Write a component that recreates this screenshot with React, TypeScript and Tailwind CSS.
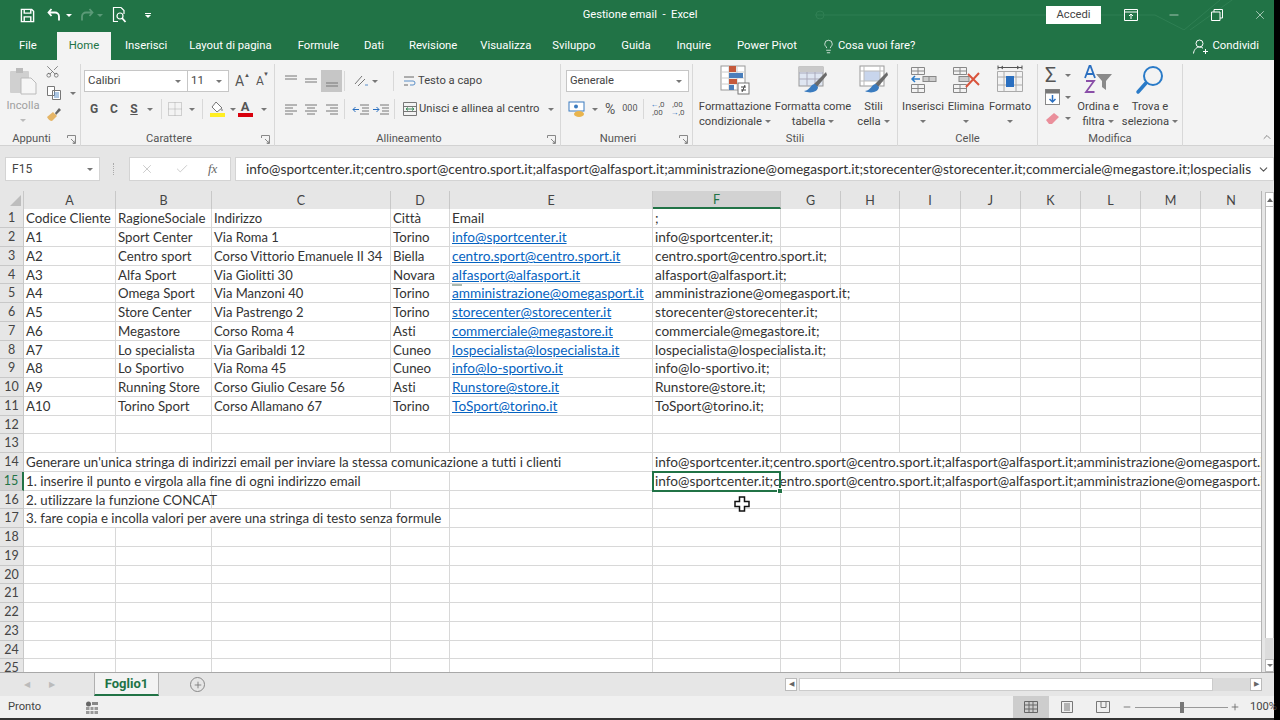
import { ChevronDown, Lightbulb, Minus, Plus, Scissors, X, Check } from 'lucide-react';
import type { ReactNode } from 'react';

const ui = "font-['Roboto',sans-serif]";
const COLS = 'grid grid-cols-[24px_92px_96px_179px_59px_203px_128px_60px_59px_61px_60px_60px_60px_60px_61px]';
const HEADERS = ['A', 'B', 'C', 'D', 'E', 'F', 'G', 'H', 'I', 'J', 'K', 'L', 'M', 'N'];
const SHEET_FONT = "font-['Lato',sans-serif] text-[#333] [font-variant-ligatures:none]";

const clients = [
  ['A1', 'Sport Center', 'Via Roma 1', 'Torino', 'info@sportcenter.it'],
  ['A2', 'Centro sport', 'Corso Vittorio Emanuele II 34', 'Biella', 'centro.sport@centro.sport.it'],
  ['A3', 'Alfa Sport', 'Via Giolitti 30', 'Novara', 'alfasport@alfasport.it'],
  ['A4', 'Omega Sport', 'Via Manzoni 40', 'Torino', 'amministrazione@omegasport.it'],
  ['A5', 'Store Center', 'Via Pastrengo 2', 'Torino', 'storecenter@storecenter.it'],
  ['A6', 'Megastore', 'Corso Roma 4', 'Asti', 'commerciale@megastore.it'],
  ['A7', 'Lo specialista', 'Via Garibaldi 12', 'Cuneo', 'lospecialista@lospecialista.it'],
  ['A8', 'Lo Sportivo', 'Via Roma 45', 'Cuneo', 'info@lo-sportivo.it'],
  ['A9', 'Running Store', 'Corso Giulio Cesare 56', 'Asti', 'Runstore@store.it'],
  ['A10', 'Torino Sport', 'Corso Allamano 67', 'Torino', 'ToSport@torino.it'],
];

const LONG = 'info@sportcenter.it;centro.sport@centro.sport.it;alfasport@alfasport.it;amministrazione@omegasport.it;storecenter@storecenter.it';

type RowData = { cells: Record<number, string>; spill?: number[] };

const rows: RowData[] = [
  { cells: { 0: 'Codice Cliente', 1: 'RagioneSociale', 2: 'Indirizzo', 3: 'Città', 4: 'Email', 5: ';' } },
  ...clients.map((c) => ({
    cells: { 0: c[0], 1: c[1], 2: c[2], 3: c[3], 4: c[4], 5: c[4] + ';' } as Record<number, string>,
  })),
  { cells: {} },
  { cells: {} },
  { cells: { 0: "Generare un'unica stringa di indirizzi email per inviare la stessa comunicazione a tutti i clienti", 5: LONG }, spill: [0, 1, 2, 3, 5, 6, 7, 8, 9, 10, 11, 12, 13] },
  { cells: { 0: '1. inserire il punto e virgola alla fine di ogni indirizzo email', 5: LONG }, spill: [0, 1, 2, 5, 6, 7, 8, 9, 10, 11, 12, 13] },
  { cells: { 0: '2. utilizzare la funzione CONCAT' }, spill: [0] },
  { cells: { 0: '3. fare copia e incolla valori per avere una stringa di testo senza formule' }, spill: [0, 1, 2] },
  ...Array.from({ length: 8 }, () => ({ cells: {} })),
];

function Caret({ className = '' }: { className?: string }) {
  return <span className={'inline-block w-0 h-0 border-x-[3px] border-x-transparent border-t-[3px] border-t-[#777] ' + className} />;
}

function Launcher() {
  return (
    <svg width="9" height="9" viewBox="0 0 9 9" fill="none" stroke="#888">
      <path d="M.5 3V.5H8.500V8.500H6M4 4l4 4M8 5.500V8H5.500" />
    </svg>
  );
}

function Group({ w, label, launcher, children }: { w: string; label: string; launcher?: boolean; children: ReactNode }) {
  return (
    <div className={'relative flex flex-col shrink-0 h-[82px] mt-[4px] border-r border-[#d8d8d8] ' + w}>
      <div className="h-[66px] flex">{children}</div>
      <div className={'h-[16px] pt-[2px] flex items-center justify-center text-[11.2px] text-[#555] ' + (launcher ? 'pr-[17px]' : '')}>{label}</div>
      {launcher && <div className="absolute right-[4px] bottom-[2px]"><Launcher /></div>}
    </div>
  );
}

function BigButton({ w, icon, lines, caret = true }: { w: string; icon: ReactNode; lines: string[]; caret?: boolean }) {
  return (
    <div className={'flex flex-col items-center shrink-0 ' + w}>
      <div className="h-[32px] flex items-center justify-center">{icon}</div>
      <div className="text-[11.2px] leading-[15px] text-[#444] mt-[3px] text-center whitespace-nowrap">{lines[0]}</div>
      <div className="text-[11.2px] leading-[15px] text-[#444] text-center whitespace-nowrap flex items-center gap-[3px] justify-center h-[15px]">
        {lines[1]}
        {caret && <Caret />}
      </div>
    </div>
  );
}

function Lines({ kind }: { kind: 'left' | 'center' | 'right' | 'top' | 'mid' | 'bottom' }) {
  const d = {
    left: 'M2 4h12M2 7h8M2 10h12M2 13h8',
    center: 'M2 4h12M4 7h8M2 10h12M4 13h8',
    right: 'M2 4h12M6 7h8M2 10h12M6 13h8',
    top: 'M2 3h12M2 6h12',
    mid: 'M2 6h12M2 9h12',
    bottom: 'M2 10h12M2 13h12',
  }[kind];
  return <svg width="16" height="16" viewBox="0 0 16 16" fill="none" stroke="#777"><path d={d} /></svg>;
}

function VSep({ className = '' }: { className?: string }) {
  return <span className={'w-px h-[20px] bg-[#d8d8d8] shrink-0 ' + className} />;
}

function Clipboard() {
  return (
    <div className="flex w-full">
      <div className="w-[46px] flex flex-col items-center">
        <svg width="28" height="28" viewBox="0 0 28 28" className="mt-[3px]">
          <rect x="1" y="4" width="19" height="22" rx="1" fill="#d0d0d0" />
          <rect x="7" y="1" width="7" height="5" fill="#bbb" />
          <path d="M12 11h10l5 5v11H12z" fill="#f6f6f6" stroke="#bbb" />
        </svg>
        <span className="text-[11.2px] text-[#a0a0a0] leading-[15px] mt-[3px]">Incolla</span>
        <Caret className="mt-[6px] !border-t-[#bbb]" />
      </div>
      <div className="flex flex-col items-start">
        <Scissors size={15} strokeWidth={1.2} color="#666" className="ml-[-1px] -rotate-90" />
        <div className="flex items-center mt-[6px]">
          <svg width="16" height="16" viewBox="0 0 16 16" fill="#fff" stroke="#777" className="mr-[8px]">
            <path d="M1.500 1.500h7v9h-7zM6.500 5.500h8v9h-8z" />
            <path d="M8 8h5M8 10h5M8 12h5" stroke="#5a8fc8" />
          </svg>
          <Caret />
        </div>
        <svg width="16" height="16" viewBox="0 0 16 16" className="mt-[5px]">
          <path d="M9 7 L13 2 L15 4 L10 9z" fill="#666" />
          <path d="M1 11 L7 6 L11 10 L6 15 Q3 15 1 11z" fill="#e5b566" />
        </svg>
      </div>
    </div>
  );
}

function FontGroup() {
  return (
    <div className="flex flex-col pl-[3px] pt-[6px] w-full">
      <div className="flex items-center h-[22px]">
        <div className="w-[104px] h-[22px] border border-[#c6c6c6] bg-white flex items-center justify-between px-[3px] text-[11.5px] text-[#444]">
          <span>Calibri</span>
          <Caret className="mr-[3px]" />
        </div>
        <div className="w-[41px] h-[22px] border border-[#c6c6c6] border-l-0 bg-white flex items-center justify-between px-[3px] text-[11.5px] text-[#444]">
          <span>11</span>
          <Caret className="mr-[3px]" />
        </div>
        <span className="ml-[6px] text-[14px] text-[#555] w-[20px] relative">A<span className="absolute text-[6px] left-[9px] top-[-1px]">▲</span></span>
        <span className="ml-[1px] text-[12px] text-[#555] w-[14px] relative">A<span className="absolute text-[6px] left-[7px] top-[-3px]">▼</span></span>
      </div>
      <div className="flex items-center h-[22px] mt-[6px] text-[12px] font-bold text-[#555]">
        <span className="w-[20px] text-center">G</span>
        <span className="w-[20px] text-center">C</span>
        <span className="w-[20px] text-center underline">S</span>
        <Caret className="ml-[3px]" />
        <VSep className="ml-[8px]" />
        <svg width="16" height="16" viewBox="0 0 16 16" fill="none" stroke="#aaa" strokeDasharray="1 1" className="ml-[5px]"><path d="M1.500 1.500h13v13h-13zM8 1.500v13M1.500 8h13" /></svg>
        <Caret className="ml-[6px]" />
        <VSep className="ml-[7px]" />
        <div className="ml-[6px] flex flex-col items-center w-[16px]">
          <svg width="14" height="12" viewBox="0 0 14 12" fill="#fff" stroke="#777"><path d="M6 1 12 7 7 11 2 6z" /><path d="M12 8v2" /></svg>
          <span className="w-[15px] h-[4px] bg-[#ffee22]" />
        </div>
        <Caret className="ml-[5px]" />
        <div className="ml-[1px] flex flex-col items-center w-[16px] leading-none">
          <span className="text-[13px] text-[#555] font-bold leading-[12px]">A</span>
          <span className="w-[15px] h-[4px] bg-[#d8000c]" />
        </div>
        <Caret className="ml-[8px]" />
      </div>
    </div>
  );
}

function AlignGroup() {
  return (
    <div className="flex flex-col pl-[6px] pt-[6px] w-full text-[11.2px] text-[#444]">
      <div className="flex items-center h-[22px]">
        <span className="w-[20px] flex justify-center"><Lines kind="top" /></span>
        <span className="w-[20px] flex justify-center"><Lines kind="mid" /></span>
        <span className="w-[21px] h-[22px] flex items-center justify-center bg-[#c6c6c6]"><Lines kind="bottom" /></span>
        <VSep className="ml-[2px]" />
        <svg width="18" height="16" viewBox="0 0 18 16" fill="none" stroke="#777" className="ml-[7px]"><path d="M3 11 10 3M6 13l7-7" /><path d="M13 12h3" stroke="#5a8fc8" /></svg>
        <Caret className="ml-[2px]" />
        <VSep className="ml-[15px]" />
        <svg width="16" height="16" viewBox="0 0 16 16" fill="none" className="ml-[7px]"><path d="M3 4h10M3 12h4" stroke="#666" /><path d="M3 8h9a2 2 0 0 1 0 4H9" stroke="#5a8fc8" /></svg>
        <span className="ml-[1px] whitespace-nowrap pt-[1px]">Testo a capo</span>
      </div>
      <div className="flex items-center h-[22px] mt-[6px]">
        <span className="w-[20px] flex justify-center"><Lines kind="left" /></span>
        <span className="w-[20px] flex justify-center"><Lines kind="center" /></span>
        <span className="w-[21px] flex justify-center"><Lines kind="right" /></span>
        <VSep className="ml-[2px]" />
        <svg width="18" height="16" viewBox="0 0 18 16" fill="none" stroke="#777" className="ml-[7px]"><path d="M8 4h9M10 7h7M10 10h7M8 13h9" /><path d="M7 8.500H1M3.500 6 1 8.500 3.500 11" stroke="#2a6fc0" /></svg>
        <svg width="18" height="16" viewBox="0 0 18 16" fill="none" stroke="#777" className="ml-[2px]"><path d="M8 4h9M10 7h7M10 10h7M8 13h9" /><path d="M1 8.500h6M4.500 6 7 8.500 4.500 11" stroke="#2a6fc0" /></svg>
        <VSep className="ml-[4px]" />
        <svg width="16" height="16" viewBox="0 0 16 16" fill="none" stroke="#777" className="ml-[7px]"><path d="M1.500 1.500h13v13h-13zM1.500 5.500h13M1.500 10.500h13" /><path d="M4 8h8M4 8l2-1.500M4 8l2 1.500M12 8l-2-1.500M12 8l-2 1.500" stroke="#3a8a5a" /></svg>
        <span className="ml-[1px] whitespace-nowrap pt-[1px]">Unisci e allinea al centro</span>
        <Caret className="ml-[9px]" />
      </div>
    </div>
  );
}

function NumberGroup() {
  return (
    <div className="flex flex-col pl-[5px] pt-[6px] w-full">
      <div className="w-[123px] h-[22px] border border-[#c6c6c6] bg-white flex items-center justify-between px-[3px] text-[11.2px] text-[#444]">
        <span>Generale</span>
        <Caret className="mr-[3px]" />
      </div>
      <div className="flex items-center h-[22px] mt-[6px] text-[#555]">
        <svg width="18" height="18" viewBox="0 0 18 18" className="ml-[2px]">
          <rect x="1" y="2" width="15" height="9" fill="#fff" stroke="#3a7bbf" />
          <circle cx="8" cy="6.500" r="2" fill="#3a7bbf" />
          <ellipse cx="11" cy="14" rx="5" ry="3" fill="#e9b44c" />
        </svg>
        <Caret className="ml-[6px]" />
        <span className="ml-[7px] text-[14px]">%</span>
        <span className="ml-[7px] text-[9px]">000</span>
        <VSep className="ml-[6px]" />
        <span className="ml-[5px] text-[8px] leading-[8px] text-center w-[16px]"><span className="text-[#2a6fc0]">←</span>,0<br />,00</span>
        <span className="ml-[4px] text-[8px] leading-[8px] text-center w-[16px]">,00<br /><span className="text-[#2a6fc0]">→</span>,0</span>
      </div>
    </div>
  );
}

function CondFormatIcon() {
  return (
    <svg width="30" height="30" viewBox="0 0 30 30">
      <rect x="1" y="1" width="24" height="24" fill="#fff" stroke="#999" />
      <path d="M1 7h24M1 13h24M1 19h24M9 1v24M17 1v24" stroke="#ccc" />
      <rect x="9" y="1" width="7" height="6" fill="#c55a3c" />
      <rect x="9" y="8" width="14" height="5" fill="#4a7ebb" />
      <rect x="9" y="14" width="8" height="5" fill="#c55a3c" />
      <rect x="9" y="20" width="5" height="5" fill="#4a7ebb" />
      <rect x="18" y="18" width="11" height="11" fill="#fff" stroke="#777" />
      <path d="M21 22h5M21 25h5M25 20l-3 7" stroke="#444" fill="none" />
    </svg>
  );
}

function TableIcon() {
  return (
    <svg width="30" height="28" viewBox="0 0 30 28">
      <rect x="1" y="1" width="24" height="19" fill="#dfe6f2" stroke="#999" />
      <path d="M1 7h24M1 13h24M9 1v19M17 1v19" stroke="#aab" />
      <rect x="1" y="1" width="24" height="5" fill="#c9c9c9" />
      <path d="M28 6 16 18l3 3L29 9z" fill="#6b6b6b" />
      <path d="M17 18c-5 0-4 6-11 7 6 3 14 1 14-4z" fill="#3a7bbf" />
    </svg>
  );
}

function CellStyleIcon() {
  return (
    <svg width="30" height="30" viewBox="0 0 30 30">
      <rect x="1" y="1" width="24" height="20" fill="#fff" stroke="#999" />
      <rect x="5" y="6" width="16" height="10" fill="#c8d5ec" />
      <path d="M1 6h24M1 16h24M5 1v20M21 1v20" stroke="#bbb" />
      <path d="M28 7 16 19l3 3L29 10z" fill="#6b6b6b" />
      <path d="M17 19c-5 0-4 6-11 7 6 3 14 1 14-4z" fill="#3a7bbf" />
    </svg>
  );
}

function InsertIcon() {
  return (
    <svg width="28" height="28" viewBox="0 0 28 28" fill="none" stroke="#888">
      <path d="M2.500 1.500h13v7h-13zM9 1.500v7M2.500 18.500h13v8h-13zM9 18.500v8M2.500 22.500h13M2.500 5h13" />
      <rect x="14" y="10.500" width="13" height="5" fill="#ccc" />
      <path d="M20 11v4" />
      <path d="M11 13H3M6 10l-3 3 3 3" stroke="#2a7bc8" strokeWidth="1.500" />
    </svg>
  );
}

function DeleteIcon() {
  return (
    <svg width="30" height="28" viewBox="0 0 30 28" fill="none" stroke="#888">
      <path d="M2.500 1.500h13v7h-13zM9 1.500v7M2.500 18.500h13v8h-13zM9 18.500v8M2.500 22.500h13M2.500 5h13" />
      <rect x="8" y="10.500" width="10" height="5" fill="#ccc" />
      <path d="M17 8 28 19M28 7 15 21" stroke="#d9543c" strokeWidth="2" />
    </svg>
  );
}

function FormatIcon() {
  return (
    <svg width="28" height="30" viewBox="0 0 28 30" fill="none" stroke="#888">
      <path d="M1.500 6.500h25v20h-25zM1.500 12h25M1.500 20h25M8 6.500v20M20 6.500v20" stroke="#aaa" />
      <rect x="10" y="11" width="8" height="11" fill="#2a6fc0" stroke="none" />
      <path d="M2 2.500h24M2 .5v4M26 .5v4" stroke="#555" />
      <path d="M5 2.500l2-1.500M5 2.500l2 1.500M23 2.500l-2-1.500M23 2.500l-2 1.500" stroke="#555" />
    </svg>
  );
}

function EditGroup() {
  return (
    <div className="flex w-full">
      <div className="w-[34px] pl-[7px] pt-[1px] flex flex-col shrink-0">
        <div className="flex items-center h-[20px]">
          <span className="text-[20px] leading-[20px] text-[#555] w-[15px]">Σ</span>
          <Caret className="ml-[5px]" />
        </div>
        <div className="flex items-center h-[20px] mt-[2px]">
          <svg width="15" height="16" viewBox="0 0 15 16" className="shrink-0">
            <rect x=".5" y=".5" width="14" height="15" fill="#fff" stroke="#888" />
            <rect x=".5" y=".5" width="14" height="4" fill="#777" />
            <path d="M7.500 6v7M4.500 10l3 3 3-3" fill="none" stroke="#2a6fc0" strokeWidth="1.500" />
          </svg>
          <Caret className="ml-[5px]" />
        </div>
        <div className="flex items-center h-[20px] mt-[1px]">
          <svg width="15" height="14" viewBox="0 0 15 14" className="shrink-0"><path d="M1 9 9 2l5 4-7 7H4z" fill="#ea8f9b" /></svg>
          <Caret className="ml-[5px]" />
        </div>
      </div>
      <BigButton
        w="w-[52px]"
        lines={['Ordina e', 'filtra']}
        icon={
          <svg width="30" height="30" viewBox="0 0 30 30">
            <path d="M2 13 6.500 1h1L12 13M3.800 9h7" fill="none" stroke="#2a6fc0" strokeWidth="1.800" />
            <path d="M3 16h8L3 27h8.500" fill="none" stroke="#8a4fa8" strokeWidth="1.800" />
            <path d="M13 9h16l-6 7v9l-4-3v-6z" fill="#8a8a8a" />
          </svg>
        }
      />
      <BigButton
        w="w-[52px]"
        lines={['Trova e', 'seleziona']}
        icon={
          <svg width="30" height="30" viewBox="0 0 30 30" fill="none" stroke="#2a7bc8">
            <circle cx="18" cy="11" r="9" strokeWidth="2" />
            <path d="M11 18 3 27" strokeWidth="3.500" strokeLinecap="round" />
          </svg>
        }
      />
    </div>
  );
}

function TitleBar() {
  return (
    <div className="relative h-[30px] flex items-center text-white overflow-hidden">
      <svg className="absolute inset-0" width="1274" height="60" fill="none" stroke="#2f7f53">
        <path d="M815 15h340l35 18M850 33h130M1190 30l70-50M1160 50l60-50" />
        <circle cx="820" cy="15" r="4" />
      </svg>
      <svg width="15" height="15" viewBox="0 0 16 16" fill="none" stroke="#fff" strokeWidth="1.500" className="ml-[20px] relative">
        <path d="M1.500 1.500h11l2 2v11h-13zM4.500 1.500v4h7v-4M4.500 14.500v-5h7v5" />
      </svg>
      <svg width="15" height="14" viewBox="0 0 15 14" fill="none" stroke="#fff" strokeWidth="1.800" className="ml-[12px] relative">
        <path d="M4.500 1 1.500 4.500 4.500 8M2 4.500h6a4 4 0 0 1 4 4v4" />
      </svg>
      <Caret className="ml-[4px] relative !border-t-white" />
      <svg width="15" height="14" viewBox="0 0 15 14" fill="none" stroke="#5b9a78" strokeWidth="1.800" className="ml-[7px] relative">
        <path d="M10.500 1 13.500 4.500 10.500 8M13 4.500H7a4 4 0 0 0-4 4v4" />
      </svg>
      <Caret className="ml-[3px] relative !border-t-[#5b9a78]" />
      <svg width="16" height="18" viewBox="0 0 16 18" fill="none" stroke="#fff" strokeWidth="1.200" className="ml-[9px] relative">
        <path d="M9 1.500H1.500v14H6M9 1.500l3 3V8" />
        <circle cx="8" cy="10" r="3" />
        <path d="M10 12l3.500 4" strokeWidth="1.800" />
      </svg>
      <span className="ml-[17px] relative flex flex-col items-center gap-[1px]">
        <span className="w-[6px] h-px bg-white" />
        <Caret className="!border-t-white" />
      </span>
      <div className="absolute left-0 right-0 text-center text-[11.2px] pt-[1px]">
        <span className="ml-[6px] whitespace-pre">Gestione email  -  Excel</span>
      </div>
      <div className="ml-auto flex items-center relative">
        <div className="w-[55px] h-[18px] bg-white text-[#444] text-[11.2px] flex items-center justify-center">Accedi</div>
        <svg width="14" height="12" viewBox="0 0 14 12" fill="none" stroke="#fff" className="ml-[23px]">
          <path d="M.5 .5h13v11H.5zM.5 3h13M7 10V5M5 7l2-2 2 2" />
        </svg>
        <Minus size={14} strokeWidth={1} className="ml-[29px]" />
        <svg width="12" height="12" viewBox="0 0 12 12" fill="none" stroke="#fff" className="ml-[30px]">
          <path d="M.5 3h8.500v8.500H.5zM3 3V.5h8.500V9H9" />
        </svg>
        <X size={14} strokeWidth={1} className="ml-[30px] mr-[7px]" />
      </div>
    </div>
  );
}

function TabBar() {
  const tabs = [
    ['Layout di pagina', 'ml-[22px]'],
    ['Formule', 'ml-[26px]'],
    ['Dati', 'ml-[25px]'],
    ['Revisione', 'ml-[25px]'],
    ['Visualizza', 'ml-[23px]'],
    ['Sviluppo', 'ml-[21px]'],
    ['Guida', 'ml-[26px]'],
    ['Inquire', 'ml-[26px]'],
    ['Power Pivot', 'ml-[26px]'],
  ];
  return (
    <div className="relative h-[30px] flex items-end text-white text-[11.3px]">
      <span className="ml-[19px] w-[38px] h-[30px] pt-[2px] flex items-center">File</span>
      <span className="w-[54px] h-[28px] bg-[#f3f3f3] text-[#217346] flex items-center justify-center">Home</span>
      <span className="ml-[14px] h-[30px] pt-[2px] flex items-center whitespace-nowrap">Inserisci</span>
      {tabs.map(([t, m]) => (
        <span key={t} className={'h-[30px] pt-[2px] flex items-center whitespace-nowrap ' + m}>{t}</span>
      ))}
      <span className="ml-[24px] h-[30px] pt-[2px] flex items-center gap-[2px] whitespace-nowrap">
        <Lightbulb size={15} strokeWidth={1.2} />
        Cosa vuoi fare?
      </span>
      <span className="ml-auto mr-[15px] h-[30px] pt-[2px] flex items-center gap-[4px]">
        <svg width="16" height="15" viewBox="0 0 16 15" fill="none" stroke="#fff">
          <circle cx="6.500" cy="4.500" r="3.500" />
          <path d="M.5 14.500C1 10 4 8 6.500 8c1.500 0 2.500.5 3.500 1.200M12.500 10v5M10 12.500h5" />
        </svg>
        Condividi
      </span>
    </div>
  );
}

function Ribbon() {
  return (
    <div className="relative h-[86px] bg-[#f3f3f3] flex border-b border-[#d2d2d2]">
      <Group w="w-[81px]" label="Appunti" launcher><Clipboard /></Group>
      <Group w="w-[194px]" label="Carattere" launcher><FontGroup /></Group>
      <Group w="w-[286px]" label="Allineamento" launcher><AlignGroup /></Group>
      <Group w="w-[132px]" label="Numeri" launcher><NumberGroup /></Group>
      <Group w="w-[205px]" label="Stili">
        <BigButton w="w-[84px]" icon={<CondFormatIcon />} lines={['Formattazione', 'condizionale']} />
        <BigButton w="w-[72px]" icon={<TableIcon />} lines={['Formatta come', 'tabella']} />
        <BigButton w="w-[49px]" icon={<CellStyleIcon />} lines={['Stili', 'cella']} />
      </Group>
      <Group w="w-[140px]" label="Celle">
        <BigButton w="w-[50px]" icon={<InsertIcon />} lines={['Inserisci', '']} />
        <BigButton w="w-[36px]" icon={<DeleteIcon />} lines={['Elimina', '']} />
        <BigButton w="w-[52px]" icon={<FormatIcon />} lines={['Formato', '']} />
      </Group>
      <Group w="w-[145px]" label="Modifica"><EditGroup /></Group>
      <ChevronDown size={12} strokeWidth={1.5} color="#666" className="absolute right-[1px] bottom-[2px] rotate-180" />
    </div>
  );
}

function FormulaBar() {
  return (
    <div className="h-[45px] bg-[#e6e6e6] flex items-start pt-[11px]">
      <div className="ml-[5px] w-[95px] h-[24px] bg-white border border-[#d4d4d4] flex items-center justify-between pl-[6px] pr-[6px] text-[12px] text-[#444]">
        <span>F15</span>
        <Caret />
      </div>
      <span className="ml-[13px] mt-[6px] h-[12px] w-px border-l border-dotted border-[#aaa]" />
      <div className="ml-[15px] w-[102px] h-[24px] bg-white border border-[#d4d4d4] flex items-center text-[#bbb]">
        <X size={14} strokeWidth={1.3} className="ml-[10px]" />
        <Check size={14} strokeWidth={1.3} className="ml-[21px]" />
        <span className="ml-[19px] text-[13px] italic font-['Liberation_Serif',serif] text-[#666]">fx</span>
      </div>
      <div className="ml-[4px] flex-1 h-[24px] bg-white border border-[#d4d4d4] flex items-center pl-[10px] pr-[2px] relative overflow-hidden">
        <span className={SHEET_FONT + ' text-[13.65px] whitespace-nowrap overflow-hidden w-[1007px] shrink-0'}>
          info@sportcenter.it;centro.sport@centro.sport.it;alfasport@alfasport.it;amministrazione@omegasport.it;storecenter@storecenter.it;commerciale@megastore.it;lospecialis
        </span>
        <ChevronDown size={13} strokeWidth={2} color="#555" className="ml-auto mr-[1px]" />
      </div>
    </div>
  );
}

function ColumnHeader() {
  return (
    <div className={COLS + " h-[18px] shrink-0 bg-[#e6e6e6] text-[12.5px] leading-[15px] text-[#444] font-['Lato',sans-serif]"}>
      <div className="relative border-r border-[#c8c8c8]">
        <span className="absolute right-[2px] bottom-[3px] w-0 h-0 border-l-[11px] border-l-transparent border-b-[11px] border-b-[#bdbdbd]" />
      </div>
      {HEADERS.map((h) => (
        <div
          key={h}
          className={
            'flex items-center justify-center border-r ' +
            (h === 'F' ? 'bg-[#d2d2d2] border-[#c8c8c8] border-b-2 border-b-[#217346] text-[#217346]' : 'border-[#c8c8c8]')
          }
        >
          {h}
        </div>
      ))}
    </div>
  );
}

function cellSize(i: number) {
  if (i >= 4) return 'text-[13.65px] ';
  if (i === 0) return 'text-[13.3px] ';
  if (i === 2) return 'text-[13px] ';
  return 'text-[13.25px] ';
}

function Row({ n, row }: { n: number; row: RowData }) {
  const linkRow = n >= 2 && n <= 11;
  return (
    <div className={COLS + ' shrink-0 ' + SHEET_FONT + (n % 4 === 0 ? ' h-[18px]' : ' h-[19px]')}>
      <div
        className={
          'flex items-center justify-center text-[12.5px] leading-[14px] border-b border-r ' +
          (n === 15
            ? 'bg-[#d2d2d2] border-b-[#c8c8c8] border-r-2 border-r-[#217346] text-[#217346]'
            : 'bg-[#e6e6e6] border-[#c8c8c8] text-[#444]')
        }
      >
        {n}
      </div>
      {HEADERS.map((_, i) => {
        const text = row.cells[i];
        const link = linkRow && i === 4;
        return (
          <div
            key={i}
            className={
              'bg-white border-b border-[#d8d8d8] pl-[2px] pt-[1px] whitespace-nowrap leading-[16px] relative ' +
              cellSize(i) +
              (row.spill?.includes(i) ? '' : 'border-r')
            }
          >
            {text && <span className={'relative z-10 ' + (link ? 'text-[#0563c1] underline' : '')}>{text}</span>}
            {n === 5 && i === 4 && <span className="absolute left-[2px] top-0 w-[10px] h-[2px] bg-[#c8d4cc] border-y border-[#aab8ae]" />}
          </div>
        );
      })}
    </div>
  );
}

function VerticalScroll() {
  return (
    <div className="w-[12px] shrink-0 flex flex-col pl-[3px] pt-[1px]">
      <div className="h-[15px] flex items-center justify-center bg-white border border-[#bbb]">
        <span className="w-0 h-0 border-x-[3px] border-x-transparent border-b-[4px] border-b-[#666]" />
      </div>
      <div className="h-[431px] bg-white border-x border-[#bbb]" />
      <div className="flex-1 bg-[#dcdcdc]" />
      <div className="h-[13px] flex items-center justify-center bg-white border border-[#bbb]">
        <Caret />
      </div>
    </div>
  );
}

function Sheet() {
  return (
    <div className="relative flex h-[481px] shrink-0 overflow-hidden bg-[#e6e6e6]">
      <div className="w-[1262px] shrink-0 overflow-hidden flex flex-col border-r border-[#b4b4b4]">
        <ColumnHeader />
        {rows.map((row, i) => (
          <Row key={i} n={i + 1} row={row} />
        ))}
      </div>
      <VerticalScroll />
      {/* selected cell F15 */}
      <div className="absolute left-[652px] top-[280px] w-[129px] h-[21px] border-2 border-[#217346] z-20 pointer-events-none">
        <span className="absolute right-[-4px] bottom-[-4px] w-[6px] h-[6px] bg-[#217346] border border-white" />
      </div>
      <svg width="16" height="16" viewBox="0 0 16 16" className="absolute left-[734px] top-[305px] z-30" fill="#fff" stroke="#111" strokeWidth="1.500">
        <path d="M5.500 1h5v4.500H15v5h-4.500V15h-5v-4.500H1v-5h4.500z" />
      </svg>
    </div>
  );
}

function SheetTabs() {
  return (
    <div className="h-[24px] shrink-0 bg-[#e6e6e6] border-t border-[#a8a8a8] flex items-stretch">
      <div className="w-[94px] shrink-0 flex items-center pl-[24px] gap-[19px] text-[8px] text-[#bbb]">
        <span>◀</span>
        <span>▶</span>
      </div>
      <div className="w-[65px] shrink-0 bg-[#f3f3f3] border-x border-[#b0b0b0] border-b-2 border-b-[#217346] flex items-center justify-center text-[13px] font-bold text-[#217346]">
        Foglio1
      </div>
      <span className="ml-[31px] self-center w-[15px] h-[15px] rounded-full border border-[#888] flex items-center justify-center">
        <Plus size={10} strokeWidth={2} color="#777" />
      </span>
      <div className="ml-[580px] self-center flex items-center">
        <span className="w-[12px] h-[13px] bg-white border border-[#bbb] flex items-center justify-center text-[7px] text-[#666]">◀</span>
        <span className="ml-[2px] w-[414px] h-[13px] bg-white border border-[#ccc]" />
        <span className="w-[37px] h-[13px] bg-[#dadada]" />
        <span className="w-[12px] h-[13px] bg-white border border-[#bbb] flex items-center justify-center text-[7px] text-[#666]">▶</span>
      </div>
    </div>
  );
}

function StatusBar() {
  return (
    <div className="h-[22px] shrink-0 bg-[#f0f0f0] flex items-center text-[11.2px] text-[#444]">
      <span className="ml-[8px] w-[33px]">Pronto</span>
      <svg width="14" height="13" viewBox="0 0 14 13" className="ml-[44px]">
        <circle cx="3.500" cy="3" r="2.500" fill="#666" />
        <rect x="1" y="6" width="12" height="7" fill="#999" />
        <rect x="7" y="1" width="6" height="3" fill="#888" />
        <path d="M1 9.500h12M5 6v7M9 6v7" stroke="#f0f0f0" />
      </svg>
      <div className="ml-auto flex items-center h-full">
        <span className="w-[36px] h-full bg-[#cdcdcd] flex items-center justify-center">
          <svg width="14" height="12" viewBox="0 0 14 12" fill="none" stroke="#666"><path d="M.5 .5h13v11H.5zM.5 4h13M.5 8h13M5 .5v11M9 .5v11" /></svg>
        </span>
        <span className="w-[36px] flex justify-center">
          <svg width="12" height="12" viewBox="0 0 12 12" fill="none" stroke="#777"><path d="M.5 .5h11v11H.5zM3 3h6M3 5h6M3 7h6M3 9h6" /></svg>
        </span>
        <span className="w-[36px] flex justify-center">
          <svg width="14" height="12" viewBox="0 0 14 12" fill="none" stroke="#777"><path d="M.5 .5h13v11H.5zM5 .5v6h5v-6" /></svg>
        </span>
        <Minus size={10} strokeWidth={2} color="#666" className="ml-[1px]" />
        <div className="relative ml-[3px] w-[93px] h-px bg-[#999]">
          <span className="absolute left-[45px] top-[-5px] w-[4px] h-[11px] bg-[#777]" />
        </div>
        <Plus size={10} strokeWidth={2} color="#666" className="ml-[2px]" />
        <span className="ml-[10px] w-[24px] whitespace-nowrap">100%</span>
      </div>
    </div>
  );
}

export default function App() {
  return (
    <div className={'w-[1280px] h-[720px] overflow-hidden bg-black flex ' + ui}>
      <div className="w-[1274px] shrink-0 flex flex-col h-[720px]">
        <div className="bg-[#217346] shrink-0">
          <TitleBar />
          <TabBar />
        </div>
        <Ribbon />
        <FormulaBar />
        <Sheet />
        <SheetTabs />
        <StatusBar />
        <div className="h-[2px] bg-[#333]" />
      </div>
    </div>
  );
}
